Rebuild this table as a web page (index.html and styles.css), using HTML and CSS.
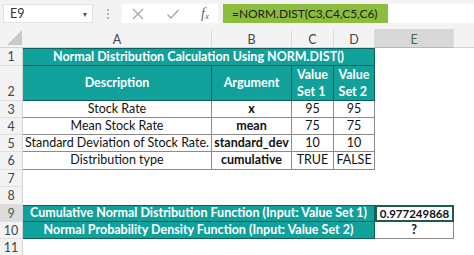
FILE: index.html
```html
<!DOCTYPE html>
<html>
<head>
<meta charset="utf-8">
<link rel="stylesheet" href="styles.css">
</head>
<body>
<div class="toolbar">
  <div class="namebox"><span>E9</span><span class="caret">&#9662;</span></div>
  <div class="dots"><i></i><i></i><i></i></div>
  <div class="icons">
    <svg width="14" height="14" viewBox="0 0 14 14"><path d="M2 2L12 12M12 2L2 12" stroke="#a6a6a6" stroke-width="1.3" fill="none"/></svg>
    <svg width="14" height="14" viewBox="0 0 14 14"><path d="M1.5 7.5L5 11L12.5 3" stroke="#a6a6a6" stroke-width="1.3" fill="none"/></svg>
    <span class="fx">f<sub>x</sub></span>
  </div>
  <div class="formula">=NORM.DIST(C3,C4,C5,C6)</div>
  <div class="formula-rest"></div>
</div>
<div class="sheet">
  <div class="corner"><svg width="15" height="15" viewBox="0 0 15 15"><path d="M15 0L15 15L0 15Z" fill="#c9c9c9"/></svg></div>
  <div class="colhead">A</div>
  <div class="colhead">B</div>
  <div class="colhead">C</div>
  <div class="colhead">D</div>
  <div class="colhead sel">E</div>
  <div class="colhead blank"></div>

  <div class="rowhead">1</div>
  <div class="c teal title span4 top">Normal Distribution Calculation Using NORM.DIST()</div>
  <div class="c empty span2"></div>

  <div class="rowhead bottom">2</div>
  <div class="c teal">Description</div>
  <div class="c teal">Argument</div>
  <div class="c teal two">Value<br>Set 1</div>
  <div class="c teal two">Value<br>Set 2</div>
  <div class="c empty span2"></div>

  <div class="rowhead">3</div>
  <div class="c w">Stock Rate</div>
  <div class="c w b">x</div>
  <div class="c w">95</div>
  <div class="c w">95</div>
  <div class="c empty span2"></div>

  <div class="rowhead">4</div>
  <div class="c w">Mean Stock Rate</div>
  <div class="c w b">mean</div>
  <div class="c w">75</div>
  <div class="c w">75</div>
  <div class="c empty span2"></div>

  <div class="rowhead">5</div>
  <div class="c w">Standard Deviation of Stock Rate.</div>
  <div class="c w b">standard_dev</div>
  <div class="c w">10</div>
  <div class="c w">10</div>
  <div class="c empty span2"></div>

  <div class="rowhead">6</div>
  <div class="c w">Distribution type</div>
  <div class="c w b">cumulative</div>
  <div class="c w">TRUE</div>
  <div class="c w">FALSE</div>
  <div class="c empty span2"></div>

  <div class="rowhead">7</div>
  <div class="c empty span6"></div>
  <div class="rowhead">8</div>
  <div class="c empty span6"></div>

  <div class="rowhead selrow">9</div>
  <div class="c teal span4 top">Cumulative Normal Distribution Function (Input: Value Set 1)</div>
  <div class="c result">0.977249868</div>
  <div class="c empty"></div>

  <div class="rowhead">10</div>
  <div class="c teal span4">Normal Probability Density Function (Input: Value Set 2)</div>
  <div class="c w q">?</div>
  <div class="c empty"></div>

  <div class="rowhead">11</div>
  <div class="c empty span6"></div>
</div>
</body>
</html>
```
FILE: styles.css
```css
html, body {
  margin: 0;
  padding: 0;
  background: #ffffff;
  width: 474px;
  height: 255px;
  overflow: hidden;
  font-family: "Lato", "Open Sans", sans-serif;
}

.toolbar {
  height: 29px;
  background: #f3f3f3;
  display: flex;
  align-items: flex-start;
  padding-top: 4px;
  box-sizing: border-box;
}

.namebox {
  margin-left: 3px;
  width: 90px;
  height: 19px;
  background: #fff;
  box-sizing: border-box;
  border: 1px solid #e2e2e2;
  display: flex;
  align-items: center;
  justify-content: space-between;
  padding: 0 5px 0 6px;
  font-size: 12.5px;
  color: #333;
}

.caret {
  font-size: 8px;
  color: #555;
}

.dots {
  width: 29px;
  height: 19px;
  display: flex;
  flex-direction: column;
  align-items: center;
  justify-content: center;
  gap: 2px;
}

.dots i {
  width: 2px;
  height: 2px;
  background: #b5b5b5;
  display: block;
}

.icons {
  width: 96px;
  height: 19px;
  background: #fff;
  display: flex;
  align-items: center;
  justify-content: space-between;
  padding: 0 9px 0 9px;
  box-sizing: border-box;
}

.fx {
  font-family: "Liberation Serif", serif;
  font-style: italic;
  font-size: 14px;
  color: #666;
  line-height: 1;
}

.fx sub {
  font-size: 9px;
  vertical-align: -1px;
}

.formula {
  margin-left: 5px;
  width: 165px;
  height: 19px;
  background: #8dbd3c;
  color: #1c1c1c;
  font-size: 12px;
  letter-spacing: -0.05px;
  line-height: 19px;
  padding-left: 9px;
  box-sizing: border-box;
  white-space: nowrap;
  overflow: hidden;
}

.formula-rest {
  flex: 1;
  height: 19px;
  background: #fff;
}

.sheet {
  display: grid;
  grid-template-columns: 23px 189px 80px 42px 41px 79px 20px;
  grid-template-rows: 19px 18px 35px 17px 17px 17px 18px 17px 18px 17px 17px 17px;
  background: #f3f3f3;
}

.corner {
  background: #f3f3f3;
  display: flex;
  align-items: flex-end;
  justify-content: flex-end;
  padding: 0 1px 2px 0;
  border-bottom: 1px solid #d4d4d4;
}

.colhead {
  background: #f3f3f3;
  color: #444;
  font-size: 12.5px;
  display: flex;
  align-items: center;
  justify-content: center;
  border-right: 1px solid #dcdcdc;
  border-bottom: 1px solid #d4d4d4;
  padding-top: 2px;
  box-sizing: border-box;
}

.colhead.sel {
  background: #d8d8d8;
  color: #3f6d4f;
  border-bottom: 1px solid #b8b8b8;
}

.colhead.blank {
  border-right: none;
}

.rowhead {
  background: #f3f3f3;
  color: #444;
  font-size: 12.5px;
  display: flex;
  align-items: center;
  justify-content: center;
  border-right: 1px solid #d4d4d4;
  border-bottom: 1px solid #e0e0e0;
  box-sizing: border-box;
}

.rowhead.bottom {
  align-items: flex-end;
  padding-bottom: 1px;
}

.rowhead.selrow {
  background: #dcdcdc;
  color: #3f6d4f;
}

.c {
  display: flex;
  align-items: center;
  justify-content: center;
  font-size: 12.5px;
  color: #111;
  box-sizing: border-box;
  white-space: nowrap;
  overflow: hidden;
  line-height: 1;
}

.span2 { grid-column: span 2; }
.span4 { grid-column: span 4; }
.span6 { grid-column: span 6; }

.empty {
  background: #fff;
}

.teal {
  background: #12a19a;
  color: #fff;
  font-weight: bold;
  border-right: 1px solid #0c5f5b;
  border-bottom: 1px solid #0c5f5b;
}

.teal.top {
  border-top: 1px solid #0c5f5b;
}

.teal.two {
  flex-direction: column;
  line-height: 17px;
}

.title {
  padding-top: 1px;
}

.w {
  background: #fff;
  border-right: 1px solid #8a8a8a;
  border-bottom: 1px solid #8a8a8a;
}

.b, .q {
  font-weight: bold;
}

.result {
  background: #fff;
  font-weight: bold;
  font-size: 11.5px;
  border: 2px solid #1d5e4a;
}
```
